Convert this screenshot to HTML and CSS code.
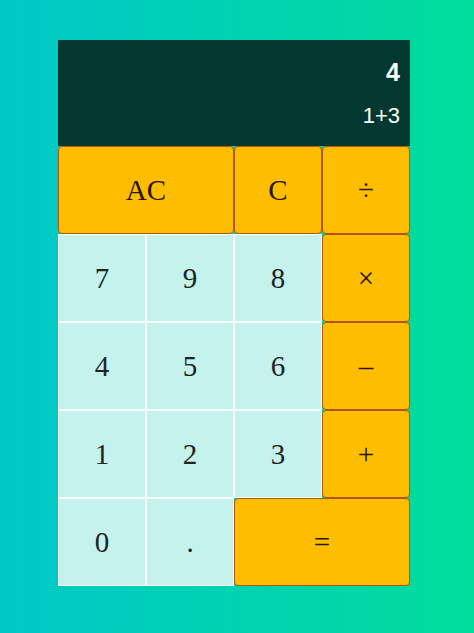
FILE: index.html
```html
<!DOCTYPE html>
<html>
<head>
<meta charset="utf-8">
<link rel="stylesheet" href="styles.css">
</head>
<body>
<div class="calc">
  <div class="display">
    <div class="result">4</div>
    <div class="expr">1+3</div>
  </div>
  <div class="keys">
    <button class="key op wide">AC</button>
    <button class="key op">C</button>
    <button class="key op">÷</button>
    <button class="key num">7</button>
    <button class="key num">9</button>
    <button class="key num">8</button>
    <button class="key op">×</button>
    <button class="key num">4</button>
    <button class="key num">5</button>
    <button class="key num">6</button>
    <button class="key op">–</button>
    <button class="key num">1</button>
    <button class="key num">2</button>
    <button class="key num">3</button>
    <button class="key op">+</button>
    <button class="key num">0</button>
    <button class="key num">.</button>
    <button class="key op wide">=</button>
  </div>
</div>
</body>
</html>
```
FILE: styles.css
```css
html, body {
  margin: 0;
  height: 100%;
}
body {
  background: linear-gradient(to right, #00c8c8, #00dd9b);
  font-family: "Liberation Sans", Arial, sans-serif;
}
.calc {
  width: 352px;
  margin: 40px 0 0 58px;
}
.display {
  height: 106px;
  box-sizing: border-box;
  background: #02382f;
  color: #fff;
  padding: 18px 10px 0;
  display: flex;
  flex-direction: column;
  align-items: flex-end;
  gap: 17px;
}
.result {
  font-size: 25px;
  font-weight: bold;
  line-height: 28px;
}
.expr {
  font-size: 22px;
  line-height: 26px;
}
.keys {
  display: grid;
  grid-template-columns: repeat(4, 88px);
  grid-auto-rows: 88px;
}
.key {
  margin: 0;
  padding: 0;
  box-sizing: border-box;
  font-family: "Liberation Serif", "Times New Roman", serif;
  font-size: 29px;
  color: #222;
  cursor: pointer;
}
.num {
  background: #c3f3ec;
  border: 1px solid #fff;
}
.op {
  background: #ffbd00;
  border: 1px solid #b2560f;
  border-radius: 4px;
  color: #2a1600;
}
.wide {
  grid-column: span 2;
}
```
